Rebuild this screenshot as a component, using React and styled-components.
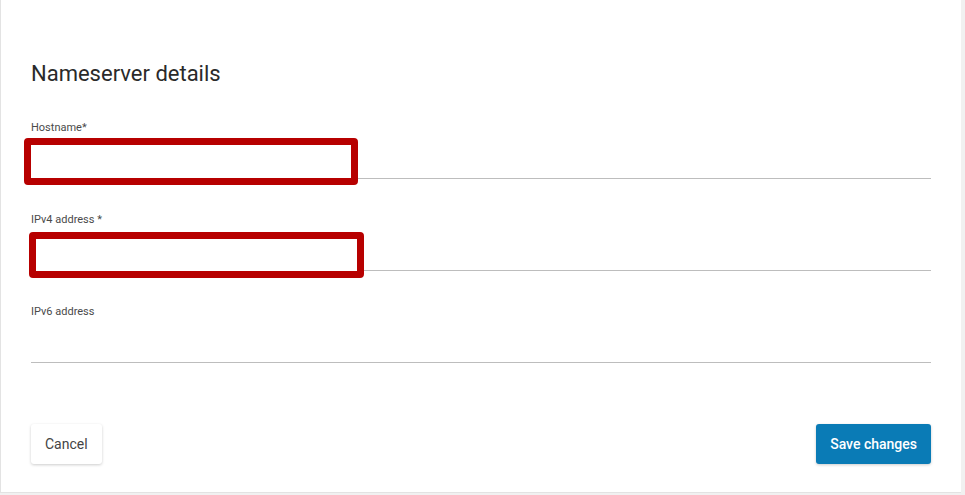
import React from "react";
import styled, { createGlobalStyle } from "styled-components";

const GlobalStyle = createGlobalStyle`
  body {
    margin: 0;
    background: #f1f1f1;
    font-family: Roboto, "Liberation Sans", Arial, sans-serif;
  }
`;

const Card = styled.div`
  width: 961px;
  height: 493px;
  box-sizing: border-box;
  background: #fff;
  border-left: 1px solid #e3e3e3;
  border-bottom: 1px solid #e3e3e3;
  padding: 62px 30px 0 30px;
  display: flex;
  flex-direction: column;
`;

const Title = styled.h2`
  margin: 0 0 35px;
  font-size: 22px;
  line-height: 24px;
  font-weight: 400;
  color: #2a2a2a;
`;

const Field = styled.div`
  position: relative;
  margin-bottom: 34px;
`;

const Label = styled.label`
  display: block;
  font-size: 11px;
  line-height: 14px;
  font-weight: 400;
  color: #4a4a4a;
`;

const Input = styled.input`
  display: block;
  width: 100%;
  height: 44px;
  box-sizing: border-box;
  border: none;
  border-bottom: 1px solid #bdbdbd;
  outline: none;
  background: transparent;
  font: inherit;
  font-size: 14px;
  padding: 0;
`;

// red annotation box drawn over the redacted value
const Redaction = styled.div`
  position: absolute;
  box-sizing: border-box;
  left: ${(p) => p.$left}px;
  top: ${(p) => p.$top}px;
  width: ${(p) => p.$width}px;
  height: ${(p) => p.$height}px;
  border: 7px solid #b70000;
  border-radius: 4px;
  background: #fff;
`;

const Actions = styled.div`
  display: flex;
  justify-content: space-between;
  margin-top: 27px;
`;

const Button = styled.button`
  height: 40px;
  padding: 0 14px;
  border: none;
  border-radius: 3px;
  font-family: inherit;
  font-size: 14px;
  font-weight: ${(p) => (p.$primary ? 500 : 400)};
  color: ${(p) => (p.$primary ? "#fff" : "#444")};
  background: ${(p) => (p.$primary ? "#0a7bb6" : "#fff")};
  box-shadow: 0 1px 3px rgba(0, 0, 0, 0.2);
  cursor: pointer;
`;

const fields = [
  { label: "Hostname*", box: { left: -7, top: 17, width: 334, height: 47 } },
  { label: "IPv4 address *", box: { left: -2, top: 19, width: 335, height: 46 } },
  { label: "IPv6 address" },
];

export default function App() {
  return (
    <>
      <GlobalStyle />
      <Card>
        <Title>Nameserver details</Title>
        {fields.map((f) => (
          <Field key={f.label}>
            <Label>{f.label}</Label>
            <Input />
            {f.box && (
              <Redaction
                $left={f.box.left}
                $top={f.box.top}
                $width={f.box.width}
                $height={f.box.height}
              />
            )}
          </Field>
        ))}
        <Actions>
          <Button>Cancel</Button>
          <Button $primary>Save changes</Button>
        </Actions>
      </Card>
    </>
  );
}
